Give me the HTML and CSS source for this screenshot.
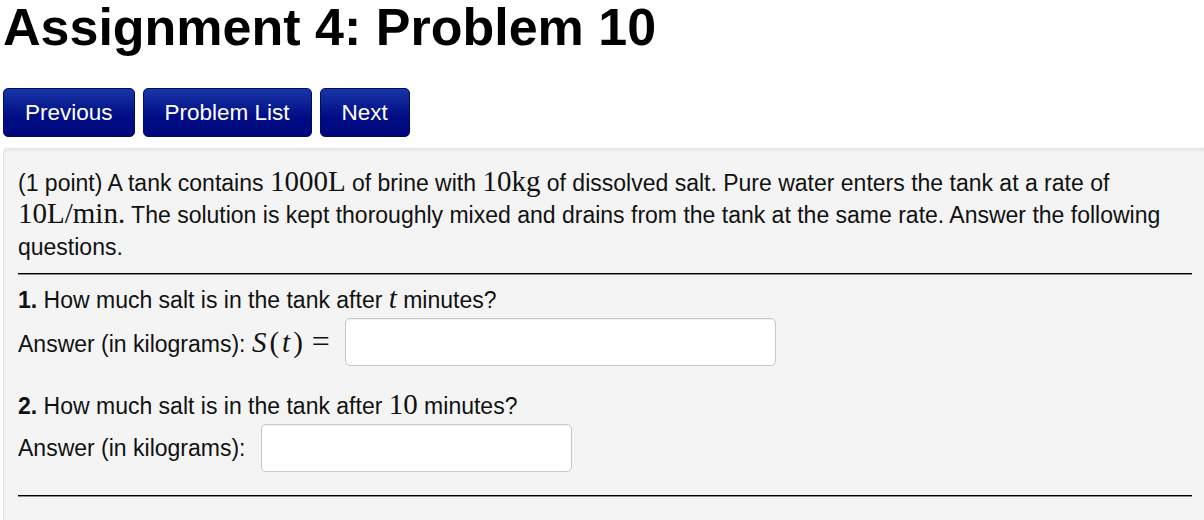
FILE: index.html
```html
<!DOCTYPE html>
<html lang="en">
<head>
    <meta charset="UTF-8">
    <meta name="viewport" content="width=device-width, initial-scale=1.0">
    <title>Assignment 4: Problem 10</title>
    <link rel="stylesheet" href="styles.css">
</head>
<body>
    <h1>Assignment 4: Problem 10</h1>

    <div class="nav">
        <a class="nav-button" href="#">Previous</a>
        <a class="nav-button" href="#">Problem List</a>
        <a class="nav-button" href="#">Next</a>
    </div>

    <div class="problem">
        <p>(1 point) A tank contains <span class="math">1000L</span> of brine with <span class="math">10kg</span> of dissolved salt. Pure water enters the tank at a rate of <span class="math">10L/min.</span> The solution is kept thoroughly mixed and drains from the tank at the same rate. Answer the following questions.</p>
        <hr>

        <div class="question">
            <div class="question-text"><b>1.</b> How much salt is in the tank after <span class="math"><i>t</i></span> minutes?</div>
            <div class="answer">
                <span>Answer (in kilograms): <span class="math expr"><i>S</i>(<i>t</i>)</span><span class="math rel">=</span></span>
                <input type="text" class="answer-input wide">
            </div>
        </div>

        <div class="question">
            <div class="question-text"><b>2.</b> How much salt is in the tank after <span class="math">10</span> minutes?</div>
            <div class="answer">
                <span>Answer (in kilograms):</span>
                <input type="text" class="answer-input narrow">
            </div>
        </div>
        <hr class="last">
    </div>
</body>
</html>
```

FILE: styles.css
```css
html {
    overflow: hidden;
}
body {
    font-family: "Liberation Sans", Arial, sans-serif;
    font-size: 23px;
    line-height: 32px;
    margin: 0;
    padding: 0 0 0 3px;
    background-color: #fff;
    color: #111;
}
h1 {
    font-size: 52px;
    line-height: 54px;
    font-weight: bold;
    margin: 0;
    color: #000;
}
.nav {
    display: flex;
    gap: 8px;
    margin-top: 34px;
}
.nav-button {
    display: flex;
    align-items: center;
    height: 49px;
    box-sizing: border-box;
    padding: 0 21px;
    border: 1px solid #000a5e;
    border-radius: 5px;
    background: linear-gradient(to bottom, #1836a4, #000c86 60%, #00077a);
    color: #fff;
    font-size: 22.5px;
    text-decoration: none;
}
.problem {
    margin-top: 11px;
    width: 1174px;
    padding: 18px 14px 40px 14px;
    background-color: #f4f4f4;
    border: 1px solid #e2e2e2;
    border-radius: 4px;
    box-shadow: inset 0 2px 3px rgba(0,0,0,0.05);
}
.problem p {
    margin: 0;
}
.math {
    font-family: "Liberation Serif", "Times New Roman", serif;
    font-size: 29px;
    line-height: 1;
}
.expr {
    letter-spacing: 3px;
}
.rel {
    margin-left: 6px;
    font-size: 32px;
}
hr {
    border: none;
    border-top: 1px solid #000;
    box-shadow: 0 1px 0 #8a8a8a;
    margin: 10px 0;
}
hr.last {
    margin-top: 23px;
}
.question + .question {
    margin-top: 24px;
}
.answer {
    display: flex;
    align-items: center;
    gap: 15px;
    margin-top: 2px;
    height: 48px;
}
.answer-input {
    height: 48px;
    box-sizing: border-box;
    border: 1px solid #c8c8c8;
    border-radius: 5px;
    background-color: #fff;
    box-shadow: inset 0 1px 1px rgba(0,0,0,0.06);
    font-size: 20px;
}
.wide {
    width: 431px;
}
.narrow {
    width: 311px;
}
```
